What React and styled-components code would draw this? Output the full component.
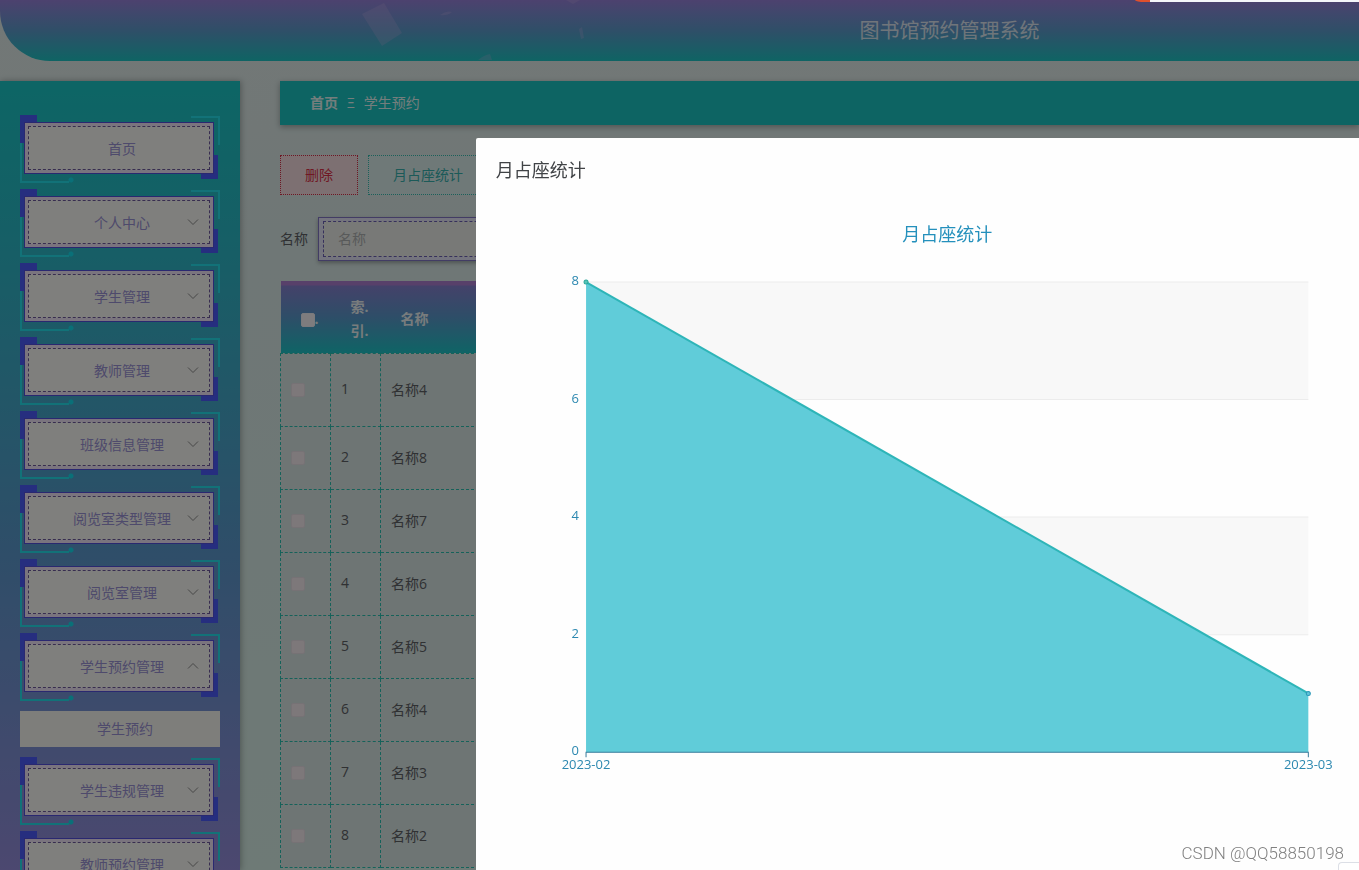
import React, { useState } from 'react'
import styled, { createGlobalStyle } from 'styled-components';

const GlobalStyle = createGlobalStyle`
  * {
    box-sizing: border-box;
  }
  body {
    margin: 0;
    overflow: hidden;
    font-family: "Open Sans", "Noto Sans CJK SC", sans-serif;
    font-size: 14px;
    color: #606266;
  }
  button, input {
    font-family: inherit;
    font-size: inherit;
  }
`;

const Page = styled.div`
  height: 100vh;
  overflow: hidden;
  background: linear-gradient(#e6f0ee, #deeeec 30%, #dcf4ec);
`;

const Header = styled.header`
  position: relative;
  display: flex;
  align-items: center;
  justify-content: center;
  height: 61px;
  padding: 0 0 2px 540px;
  border-bottom-left-radius: 50px;
  background: linear-gradient(#9a84de, #5e9ed0 50%, #1ec8c8);
  overflow: hidden;
`;

const Confetti = styled.svg`
  position: absolute;
  top: 0;
  left: 0;
`;

const SystemTitle = styled.h1`
  margin: 0;
  font-size: 20px;
  font-weight: 400;
  color: #fff;
  opacity: 0.8;
`;

const Columns = styled.div`
  display: flex;
  align-items: flex-start;
  gap: 40px;
  margin-top: 20px;
`;

const Sidebar = styled.nav`
  flex: none;
  width: 240px;
  height: calc(100vh - 81px);
  padding: 34px 20px 0;
  overflow: hidden;
  background: linear-gradient(#1acbca, #2cbecc 20%, #5e9cd2 60%, #9890e0);
  box-shadow: 1px 0 6px rgba(0, 0, 0, 0.3);
`;

const bar = (color) => `linear-gradient(${color}, ${color})`;

const MenuFrame = styled.div`
  height: 68px;
  margin-bottom: 6px;
  padding: 7px 6px 9px 4px;
  background-repeat: no-repeat;
  background-image: ${bar('#4c5cff')}, ${bar('#4c5cff')}, ${bar('#24e4f0')},
    ${bar('#24e4f0')}, ${bar('#24e4f0')}, ${bar('#24e4f0')},
    radial-gradient(circle, #14e0f0 2px, transparent 3px);
  background-size: 17px 28px, 17px 24px, 2px 39px, 49px 2px, 29px 2px, 2px 28px, 6px 6px;
  background-position: 0 0, 181px 40px, 0 28px, 0 66px, 171px 1px, 198px 2px, 48px 62px;
`;

const MenuButton = styled.button`
  display: flex;
  width: 100%;
  height: 52px;
  padding: 3px;
  border: 1px solid #5450e0;
  background: #f4e8fc;
  color: #9c94d8;
  cursor: pointer;
`;

const MenuLabel = styled.span`
  flex: 1;
  display: grid;
  grid-template-columns: 1fr auto 1fr;
  align-items: center;
  height: 100%;
  padding: 0 10px 0 16px;
  border: 1px dashed #705aa0;
  background: #fefefa;

  svg {
    justify-self: end;
  }
`;

const SubMenu = styled.a`
  display: flex;
  align-items: center;
  justify-content: center;
  height: 36px;
  margin: 10px 0;
  padding: 0 0 2px 10px;
  background: #fcfcf6;
  color: #9c94d8;
  text-decoration: none;
`;

const SubGroup = styled.div`
  display: flow-root;
  margin-top: -6px;
`;

const Main = styled.main`
  flex: 1;
  min-width: 0;
`;

const Breadcrumb = styled.div`
  display: flex;
  align-items: center;
  gap: 9px;
  height: 44px;
  padding: 0 30px 2px;
  background: #1ac8c6;
  box-shadow: 0 2px 6px rgba(0, 0, 0, 0.3);
  color: #e8fcfa;

  a {
    color: inherit;
    font-weight: 700;
    text-decoration: none;
  }
`;

const Toolbar = styled.div`
  display: flex;
  gap: 10px;
  margin-top: 30px;
`;

const ToolButton = styled.button`
  height: 40px;
  padding: 0 24px 2px;
  border: 1px dotted ${(props) => (props.$danger ? '#d83048' : '#38c0b4')};
  background: ${(props) => (props.$danger ? '#fbe0e4' : '#dff3f1')};
  color: ${(props) => (props.$danger ? '#e03048' : '#38b4b0')};
`;

const SearchForm = styled.form`
  display: flex;
  align-items: center;
  gap: 10px;
  margin-top: 22px;

  label {
    padding-bottom: 2px;
  }
`;

const InputBox = styled.div`
  width: 210px;
  height: 44px;
  padding: 3px 4px;
  border: 1px solid #8478c8;
  background: #e8e8fc;
  box-shadow: 0 2px 4px rgba(0, 0, 0, 0.3);
`;

const SearchInput = styled.input`
  width: 100%;
  height: 36px;
  padding: 0 14px 2px;
  border: 1px dashed #6c60b8;
  background: #f0f2ee;

  &::placeholder {
    color: #b0b4b4;
  }
`;

const Table = styled.table`
  width: 100%;
  margin-top: 20px;
  border-collapse: collapse;
  table-layout: fixed;

  thead tr {
    height: 72px;
    background: linear-gradient(#b080d4 4px, #8884d4 5px, #5c9cd0 50%, #1ec8cc);
  }
  tbody tr {
    height: 63px;
    background: #dceae8;
  }
  tbody tr:first-child {
    height: 73px;
  }
`;

const Th = styled.th`
  width: ${(props) => props.$width || 'auto'};
  padding: 4px 0 0 20px;
  line-height: 24px;
  text-align: left;
  white-space: nowrap;
  color: #f0f8fa;
`;

const Td = styled.td`
  padding: 0 10px 2px;
  border: 1px dashed #2cc4b4;
`;

const Check = styled.input`
  appearance: none;
  width: 14px;
  height: 14px;
  margin: 0;
  border: 1px solid ${(props) => (props.$head ? '#f4f4fa' : '#ece4ea')};
  border-radius: 2px;
  background: ${(props) => (props.$head ? '#fcf8fc' : '#faf0f4')};
  vertical-align: middle;
`;

const Mask = styled.div`
  position: fixed;
  inset: 0;
  overflow: hidden;
  background: rgba(0, 0, 0, 0.5);
`;

const Dialog = styled.section`
  margin: 138px 0 0 35%;
  border-top-left-radius: 2px;
  background: #fefefe;
`;

const DialogTitle = styled.h2`
  margin: 0;
  padding: 20px 20px 10px;
  font-size: 18px;
  font-weight: 400;
  line-height: 24px;
  color: #404346;
`;

const DialogBody = styled.div`
  padding: 30px 0 30px 20px;
`;

const DialogFooter = styled.div`
  display: flex;
  justify-content: flex-end;
  padding: 10px 0 20px;
`;

const CloseButton = styled.button`
  width: 21px;
  height: 40px;
  border: 1px solid #dcdfe6;
  border-right: none;
  border-radius: 4px 0 0 4px;
  background: #fff;
`;

const ChartSvg = styled.svg`
  display: block;
  width: 100%;
  font-size: 13px;
  fill: #2c88b0;
`;

const OtherWindow = styled.div`
  position: fixed;
  top: 0;
  right: 0;
  width: 224px;
  height: 2px;
  border-left: 15px solid #e0502c;
  border-bottom-left-radius: 10px 2px;
  background: #f4f6fa;
`;

const Watermark = styled.div`
  position: fixed;
  right: 15px;
  bottom: 5px;
  font-family: Roboto, sans-serif;
  font-size: 17px;
  font-weight: 300;
  line-height: 24px;
  color: #808080;
  text-shadow: 1px 1px 0 #fff;
`;

const menus = [
  { name: '首页', leaf: true },
  { name: '个人中心' },
  { name: '学生管理' },
  { name: '教师管理' },
  { name: '班级信息管理' },
  { name: '阅览室类型管理' },
  { name: '阅览室管理' },
  { name: '学生预约管理', children: ['学生预约'] },
  { name: '学生违规管理' },
  { name: '教师预约管理' },
];

const names = ['名称4', '名称8', '名称7', '名称6', '名称5', '名称4', '名称3', '名称2'];

const seats = [
  { month: '2023-02', total: 8 },
  { month: '2023-03', total: 1 },
];

function Arrow({ up }) {
  return (
    <svg width="12" height="8" viewBox="0 0 12 8" fill="none" stroke="#909090">
      <path d={up ? 'M1 6.5 6 1.5l5 5' : 'M1 1.5 6 6.5l5-5'} />
    </svg>
  )
}

function MenuItem({ menu }) {
  const [open, setOpen] = useState(!!menu.children);

  return (
    <>
      <MenuFrame>
        <MenuButton type="button" onClick={() => setOpen(!open)}>
          <MenuLabel>
            <span />
            <span>{menu.name}</span>
            {!menu.leaf && <Arrow up={menu.children && open} />}
          </MenuLabel>
        </MenuButton>
      </MenuFrame>
      {open && menu.children &&
        <SubGroup>
          {menu.children.map((child) => <SubMenu href="#" key={child}>{child}</SubMenu>)}
        </SubGroup>
      }
    </>
  )
}

function SeatChart() {
  const left = 90;
  const right = 812;
  const top = 60;
  const bottom = 530;
  const y = (value) => bottom - (value * (bottom - top)) / 8;
  const start = y(seats[0].total);
  const end = y(seats[1].total);

  return (
    <ChartSvg viewBox="0 0 863 600">
      <text x="451" y="19" fontSize="18" textAnchor="middle" fill="#2490bc">月占座统计</text>
      {[8, 4].map((v) => (
        <rect key={v} x={left} y={y(v)} width={right - left} height={y(v - 2) - y(v)} fill="#f8f8f8" />
      ))}
      {[8, 6, 4, 2].map((v) => (
        <line key={v} x1={left} x2={right} y1={y(v)} y2={y(v)} stroke="#ececec" />
      ))}
      <path d={`M${left} ${start}L${right} ${end}V${bottom}H${left}Z`} fill="#60ccd9" />
      <path d={`M${left} ${start}L${right} ${end}`} stroke="#2eb5b8" strokeWidth="2" />
      <path d={`M${left} ${bottom + 5}V${bottom}H${right}V${bottom + 5}`} fill="none" stroke="#3a7c9c" />
      <circle cx={left} cy={start} r="2" fill="#58c4b8" stroke="#2aa89c" />
      <circle cx={right} cy={end} r="2" fill="#60c4d8" stroke="#2c98b8" />
      {[8, 6, 4, 2, 0].map((v) => (
        <text key={v} x="83" y={y(v) + 3} textAnchor="end">{v}</text>
      ))}
      <text x={left} y="547" textAnchor="middle">{seats[0].month}</text>
      <text x={right} y="547" textAnchor="middle">{seats[1].month}</text>
    </ChartSvg>
  )
}

function App() {
  return (
    <>
      <GlobalStyle />
      <Page>
        <Header>
          <Confetti width="640" height="61" fill="#d0b8f0" fillOpacity="0.25">
            <path d="M362 14 384 3l18 30-20 13Z" />
            <path d="M440 15q6-5 12-3-5 4-12 3Z" />
            <path d="M478 60q6-5 12-6l2 6Z" />
            <path d="M566 0h14l-7 4Z" />
            <path d="M579 29l3-2 2 11-3 1Z" />
          </Confetti>
          <SystemTitle>图书馆预约管理系统</SystemTitle>
        </Header>
        <Columns>
          <Sidebar>
            {menus.map((menu) => <MenuItem menu={menu} key={menu.name} />)}
          </Sidebar>
          <Main>
            <Breadcrumb>
              <a href="#">首页</a>
              <span>Ξ</span>
              <span>学生预约</span>
            </Breadcrumb>
            <Toolbar>
              <ToolButton type="button" $danger>删除</ToolButton>
              <ToolButton type="button">月占座统计</ToolButton>
            </Toolbar>
            <SearchForm>
              <label htmlFor="name">名称</label>
              <InputBox>
                <SearchInput id="name" placeholder="名称" />
              </InputBox>
            </SearchForm>
            <Table>
              <thead>
                <tr>
                  <Th $width="50px"><Check type="checkbox" aria-label="全选" $head />.</Th>
                  <Th $width="50px">索.<br />引.</Th>
                  <Th>名称</Th>
                </tr>
              </thead>
              <tbody>
                {names.map((name, index) => (
                  <tr key={index}>
                    <Td><Check type="checkbox" aria-label={name} /></Td>
                    <Td>{index + 1}</Td>
                    <Td>{name}</Td>
                  </tr>
                ))}
              </tbody>
            </Table>
          </Main>
        </Columns>
      </Page>
      <Mask>
        <Dialog role="dialog" aria-label="月占座统计">
          <DialogTitle>月占座统计</DialogTitle>
          <DialogBody>
            <SeatChart />
          </DialogBody>
          <DialogFooter>
            <CloseButton type="button" aria-label="关闭" />
          </DialogFooter>
        </Dialog>
      </Mask>
      <OtherWindow />
      <Watermark>CSDN @QQ58850198</Watermark>
    </>
  )
}

export default App
